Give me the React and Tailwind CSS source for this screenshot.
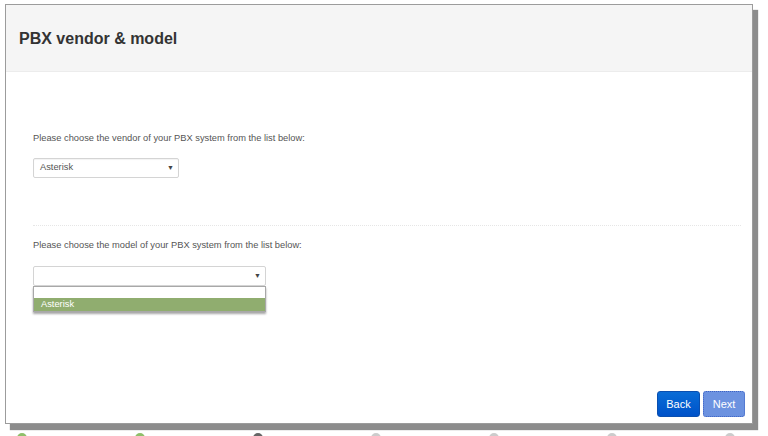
export default function App() {
  const steps = ["bg-[#8fbf6a]", "bg-[#8fbf6a]", "bg-[#666]", "bg-[#ccc]", "bg-[#ccc]", "bg-[#ccc]", "bg-[#ccc]"];
  return (
    <div className="w-[768px] h-[436px] bg-white overflow-hidden font-['Liberation_Sans',Arial,sans-serif] pt-[4px] pl-[5px]">
      <div className="w-[748px] h-[420px] border border-[#9c9c9c] bg-white shadow-[5px_6px_1px_rgba(0,0,0,0.45)] flex flex-col">
        <div className="h-[67px] bg-[#f5f5f5] border-b border-[#ececec] flex items-center px-[13px] shrink-0">
          <h1 className="text-[16px] font-bold text-[#333] leading-none mt-[1px]">PBX vendor &amp; model</h1>
        </div>
        <div className="flex-1 flex flex-col px-[27px] pr-[7px] pb-[6px]">
          <p className="mt-[60px] text-[9.3px] leading-[13px] text-[#555]">
            Please choose the vendor of your PBX system from the list below:
          </p>
          <div className="mt-[13px] w-[146px] h-[20px] border border-[#d4d4d4] rounded-[2px] flex items-center justify-between pl-[6px] pr-[4px] text-[9.3px] text-[#555] shadow-[inset_0_1px_1px_rgba(0,0,0,0.05)]">
            <span>Asterisk</span>
            <span className="text-[7px] text-[#444]">▼</span>
          </div>
          <div className="mt-[47px] mr-[4px] border-t border-dotted border-[#e6e6e6]" />
          <p className="mt-[13px] text-[9.3px] leading-[13px] text-[#555]">
            Please choose the model of your PBX system from the list below:
          </p>
          <div className="relative mt-[14px] w-[233px]">
            <div className="h-[20px] border border-[#d4d4d4] rounded-[2px] flex items-center justify-end pr-[4px] text-[9.3px] text-[#555]">
              <span className="text-[7px] text-[#444]">▼</span>
            </div>
            <div className="absolute left-0 top-[20px] w-[233px] border border-[#a8a8a8] bg-white shadow-[0_2px_2px_rgba(0,0,0,0.35)]">
              <div className="h-[11px]" />
              <div className="h-[13px] bg-[#90ad6f] text-[9.3px] text-white leading-[13px] pl-[7px]">Asterisk</div>
            </div>
          </div>
          <div className="flex-1" />
          <div className="flex justify-end gap-[3px]">
            <button className="w-[43px] h-[26px] rounded-[3px] bg-gradient-to-b from-[#0b6cd6] to-[#0052c9] border border-[#0a4fb0] text-white text-[11px]">
              Back
            </button>
            <button className="w-[42px] h-[26px] rounded-[3px] bg-[#6c92e0] border border-dotted border-[#3d62c2] text-white text-[11px]">
              Next
            </button>
          </div>
        </div>
      </div>
      <div className="flex gap-[108px] pl-[12px] mt-[9px]">
        {steps.map((c, i) => (
          <div key={i} className={`w-[10px] h-[10px] rounded-full ${c}`} />
        ))}
      </div>
    </div>
  );
}
